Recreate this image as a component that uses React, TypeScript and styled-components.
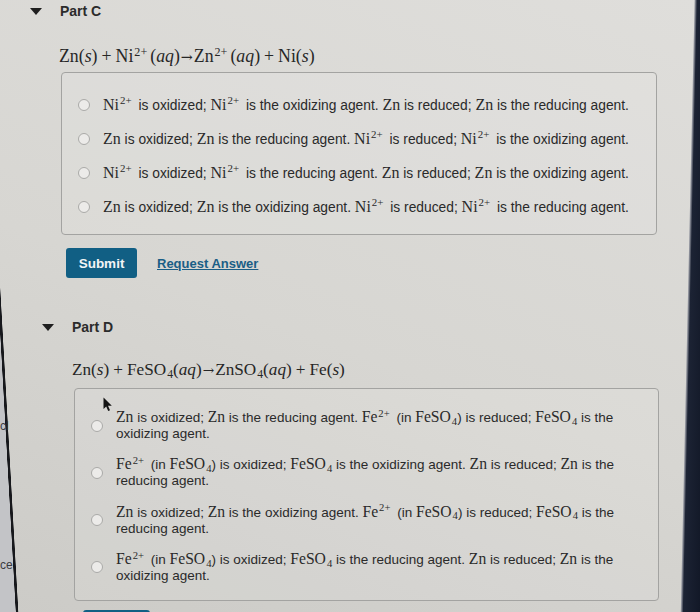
import React from "react";
import styled, { createGlobalStyle } from "styled-components";

const GlobalStyle = createGlobalStyle`
  html, body {
    margin: 0;
    padding: 0;
  }
  body {
    width: 700px;
    height: 612px;
    overflow: hidden;
    font-family: "Liberation Sans", Arial, sans-serif;
    color: #2a2a2a;
  }
`;

// the photo: another window on the left, the monitor bezel on the right
const Frame = styled.div`
  display: flex;
  width: 700px;
  height: 612px;
  overflow: hidden;
  background:
    linear-gradient(86.8deg, #c3c4c7 0, #c3c4c7 15.5px, #17181c 16px, #17181c 18px, transparent 18.6px),
    linear-gradient(91.3deg, transparent 694px, #8d909a 695px, #1c2334 697px, #121827 100%),
    linear-gradient(200deg, #dfdedb 0%, #d7d6d2 55%, #cccbc7 100%);
`;

const LeftStrip = styled.div`
  flex: 0 0 18px;
  display: flex;
  flex-direction: column;
  padding-top: 418px;
  overflow: hidden;
  font-size: 12px;
  line-height: 16px;
  color: #3a3b3f;
`;

const Fragment = styled.span<{ $top?: number }>`
  margin-top: ${(p) => p.$top || 0}px;
  white-space: nowrap;
`;

const Main = styled.div`
  flex: 1;
  display: flex;
  flex-direction: column;
`;

const Section = styled.section<{ $indent: number; $right: number }>`
  display: flex;
  flex-direction: column;
  padding-left: ${(p) => p.$indent}px;
  padding-right: ${(p) => p.$right}px;
`;

const Header = styled.div<{ $top?: number }>`
  display: flex;
  align-items: center;
  gap: 18px;
  height: 22px;
  margin-top: ${(p) => p.$top || 0}px;
`;

const Caret = styled.span`
  width: 0;
  height: 0;
  border-left: 6px solid transparent;
  border-right: 6px solid transparent;
  border-top: 7px solid #1f1f1f;
`;

const PartTitle = styled.span`
  font-size: 14px;
  font-weight: bold;
  color: #2b2b2b;
`;

const Equation = styled.div<{ $size: number; $top: number; $left: number }>`
  height: 24px;
  line-height: 24px;
  margin-top: ${(p) => p.$top}px;
  margin-left: ${(p) => p.$left}px;
  font-family: "Liberation Serif", "DejaVu Serif", serif;
  font-size: ${(p) => p.$size}px;
  color: #262626;
  white-space: nowrap;
`;

const Op = styled.span`
  margin: 0 4px;
`;

const Arrow = styled.span`
  font-family: "DejaVu Serif", serif;
  font-size: 0.8em;
  margin: 0 1px;
`;

const M = styled.span`
  font-family: "Liberation Serif", "DejaVu Serif", serif;
  font-size: 1.16em;
`;

const I = styled.i`
  font-style: italic;
`;

const Sup = styled.sup`
  font-size: 0.68em;
  line-height: 0;
  vertical-align: 0.5em;
  margin-left: 1px;
  margin-right: 3px;
`;

const Sub = styled.sub`
  font-size: 0.68em;
  line-height: 0;
  vertical-align: -0.25em;
  margin-left: 1px;
`;

const Choices = styled.div<{ $top: number; $left: number; $pt: number; $pb: number; $gap: number }>`
  position: relative;
  display: flex;
  flex-direction: column;
  gap: ${(p) => p.$gap}px;
  margin-top: ${(p) => p.$top}px;
  margin-left: ${(p) => p.$left}px;
  padding: ${(p) => p.$pt}px 18px ${(p) => p.$pb}px 16px;
  border: 1px solid #a3a3a1;
  border-radius: 4px;
  background: rgba(255, 255, 255, 0.1);
`;

const Choice = styled.label<{ $height?: number; $lh: number; $size: number; $nowrap?: boolean }>`
  display: flex;
  align-items: center;
  gap: 13px;
  min-height: ${(p) => p.$height || 0}px;
  font-size: ${(p) => p.$size}px;
  line-height: ${(p) => p.$lh}px;
  color: #2a2a2a;
  white-space: ${(p) => (p.$nowrap ? "nowrap" : "normal")};
`;

const Radio = styled.span`
  flex: 0 0 12px;
  height: 12px;
  box-sizing: border-box;
  border-radius: 50%;
  border: 1px solid #aaaaa8;
  background: #ecebe9;
`;

const Cursor = styled.svg`
  position: absolute;
  left: 28px;
  top: 8px;
  width: 10px;
  height: 15px;
`;

const Actions = styled.div<{ $left: number; $top: number }>`
  display: flex;
  align-items: center;
  gap: 20px;
  margin-top: ${(p) => p.$top}px;
  margin-left: ${(p) => p.$left}px;
`;

const SubmitButton = styled.button<{ $w: number }>`
  width: ${(p) => p.$w}px;
  height: 30px;
  padding: 0;
  border: none;
  border-radius: 3px;
  background: #115f84;
  color: #f2f4f5;
  font-family: "Liberation Sans", Arial, sans-serif;
  font-size: 13.5px;
  font-weight: bold;
`;

const RequestLink = styled.a`
  font-size: 13px;
  font-weight: bold;
  color: #1a5e86;
  text-decoration: underline;
`;

const Ni = () => (
  <M>
    Ni<Sup>2+</Sup>
  </M>
);
const Zn = () => <M>Zn</M>;
const Fe = () => (
  <M>
    Fe<Sup>2+</Sup>
  </M>
);
const FeSO4 = () => (
  <M>
    FeSO<Sub>4</Sub>
  </M>
);

const partC = [
  <>
    <Ni /> is oxidized; <Ni /> is the oxidizing agent. <Zn /> is reduced; <Zn /> is the reducing agent.
  </>,
  <>
    <Zn /> is oxidized; <Zn /> is the reducing agent. <Ni /> is reduced; <Ni /> is the oxidizing agent.
  </>,
  <>
    <Ni /> is oxidized; <Ni /> is the reducing agent. <Zn /> is reduced; <Zn /> is the oxidizing agent.
  </>,
  <>
    <Zn /> is oxidized; <Zn /> is the oxidizing agent. <Ni /> is reduced; <Ni /> is the reducing agent.
  </>,
];

const partD = [
  <>
    <Zn /> is oxidized; <Zn /> is the reducing agent. <Fe /> (in <FeSO4 />) is reduced; <FeSO4 /> is the oxidizing
    agent.
  </>,
  <>
    <Fe /> (in <FeSO4 />) is oxidized; <FeSO4 /> is the oxidizing agent. <Zn /> is reduced; <Zn /> is the reducing
    agent.
  </>,
  <>
    <Zn /> is oxidized; <Zn /> is the oxidizing agent. <Fe /> (in <FeSO4 />) is reduced; <FeSO4 /> is the reducing
    agent.
  </>,
  <>
    <Fe /> (in <FeSO4 />) is oxidized; <FeSO4 /> is the reducing agent. <Zn /> is reduced; <Zn /> is the oxidizing
    agent.
  </>,
];

export default function App() {
  return (
    <>
      <GlobalStyle />
      <Frame>
        <LeftStrip>
          <Fragment>cl</Fragment>
          <Fragment $top={123}>ce</Fragment>
        </LeftStrip>

        <Main>
          <Section $indent={12} $right={43}>
            <Header>
              <Caret />
              <PartTitle>Part C</PartTitle>
            </Header>
            <Equation $size={17.8} $top={22} $left={29}>
              Zn(<I>s</I>)<Op>+</Op>Ni<Sup>2+</Sup>(<I>aq</I>)<Arrow>→</Arrow>Zn<Sup>2+</Sup>(<I>aq</I>)<Op>+</Op>Ni(
              <I>s</I>)
            </Equation>
            <Choices $top={4} $left={31} $pt={15} $pb={10} $gap={0}>
              {partC.map((text, i) => (
                <Choice key={i} $height={34} $lh={18} $size={13.8} $nowrap>
                  <Radio />
                  <span>{text}</span>
                </Choice>
              ))}
            </Choices>
            <Actions $left={36} $top={13}>
              <SubmitButton $w={71}>Submit</SubmitButton>
              <RequestLink>Request Answer</RequestLink>
            </Actions>
          </Section>

          <Section $indent={24} $right={41}>
            <Header $top={38}>
              <Caret />
              <PartTitle>Part D</PartTitle>
            </Header>
            <Equation $size={17.2} $top={20} $left={30}>
              Zn(<I>s</I>)<Op>+</Op>FeSO<Sub>4</Sub>(<I>aq</I>)<Arrow>→</Arrow>ZnSO<Sub>4</Sub>(<I>aq</I>)<Op>+</Op>Fe(
              <I>s</I>)
            </Equation>
            <Choices $top={6} $left={32} $pt={20} $pb={16} $gap={14.3}>
              <Cursor viewBox="0 0 10 15">
                <path d="M0.5 0.5 L0.5 12 L3.2 9.4 L5.2 14 L7 13.2 L5 8.7 L8.8 8.7 Z" fill="#141414" />
              </Cursor>
              {partD.map((text, i) => (
                <Choice key={i} $lh={16} $size={13.5}>
                  <Radio />
                  <span>{text}</span>
                </Choice>
              ))}
            </Choices>
            <Actions $left={41} $top={9}>
              <SubmitButton $w={67}>Submit</SubmitButton>
            </Actions>
          </Section>
        </Main>
      </Frame>
    </>
  );
}
